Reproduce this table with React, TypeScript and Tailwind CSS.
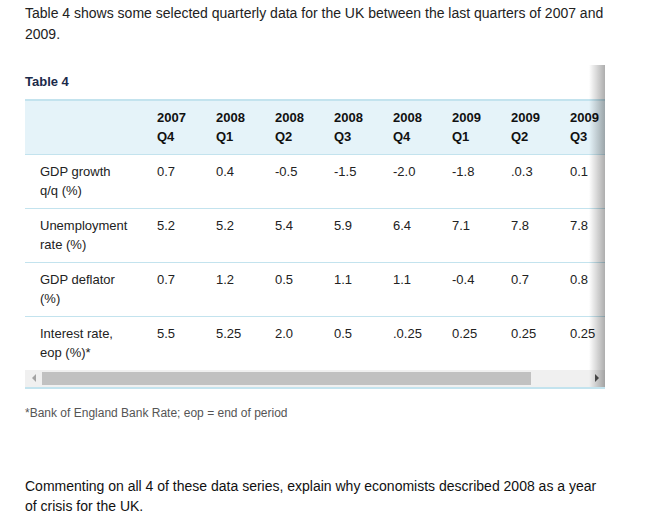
import React from "react";

const cols: [string, string][] = [
  ["2007", "Q4"],
  ["2008", "Q1"],
  ["2008", "Q2"],
  ["2008", "Q3"],
  ["2008", "Q4"],
  ["2009", "Q1"],
  ["2009", "Q2"],
  ["2009", "Q3"],
];

const rows: { label: [string, string]; vals: string[] }[] = [
  { label: ["GDP growth", "q/q (%)"], vals: ["0.7", "0.4", "-0.5", "-1.5", "-2.0", "-1.8", ".0.3", "0.1"] },
  { label: ["Unemployment", "rate (%)"], vals: ["5.2", "5.2", "5.4", "5.9", "6.4", "7.1", "7.8", "7.8"] },
  { label: ["GDP deflator", "(%)"], vals: ["0.7", "1.2", "0.5", "1.1", "1.1", "-0.4", "0.7", "0.8"] },
  { label: ["Interest rate,", "eop (%)*"], vals: ["5.5", "5.25", "2.0", "0.5", ".0.25", "0.25", "0.25", "0.25"] },
];

export default function App() {
  return (
    <div className="min-h-[530px] w-[663px] bg-white font-['Liberation_Sans',Arial,sans-serif]">
      <div className="pl-[25px]">
        <p className="w-[590px] pt-[3px] text-[14px] leading-[21px] text-[#222]">
          Table 4 shows some selected quarterly data for the UK between the last quarters of 2007 and 2009.
        </p>

        <div className="relative mt-[20px] w-[580px]">
          <div className="py-[7px] text-[13px] font-bold leading-[19.5px] text-[#1b2a4a]">Table 4</div>
          <div className="w-[580px] overflow-hidden border-t-2 border-b-2 border-[#c3e3ee]">
            <table className="w-[648px] table-fixed border-collapse text-[13px] leading-[19.5px] text-[#222]">
              <thead>
                <tr className="border-b border-[#c3e3ee] bg-[#e5f3f9]">
                  <th className="w-[117px] py-[7px] pl-[15px]" />
                  {cols.map((c, i) => (
                    <th key={i} className="w-[59px] py-[7px] pl-[15px] text-left align-top font-bold text-[#111]">
                      {c[0]}
                      <br />
                      {c[1]}
                    </th>
                  ))}
                  <th className="w-[59px]" />
                </tr>
              </thead>
              <tbody>
                {rows.map((r, ri) => (
                  <tr key={ri} className={ri < rows.length - 1 ? "border-b border-[#c3e3ee]" : ""}>
                    <td className="py-[7px] pl-[15px] align-top">
                      {r.label[0]}
                      <br />
                      {r.label[1]}
                    </td>
                    {r.vals.map((v, vi) => (
                      <td key={vi} className="py-[7px] pl-[15px] align-top">
                        {v}
                      </td>
                    ))}
                    <td />
                  </tr>
                ))}
              </tbody>
            </table>
            <div className="flex h-[17px] items-center bg-[#f0f0f0]">
              <div className="flex h-[17px] w-[17px] items-center justify-center">
                <div className="h-0 w-0 border-y-[4px] border-r-[4px] border-y-transparent border-r-[#a3a3a3]" />
              </div>
              <div className="h-[13px] w-[489px] bg-[#c1c1c1]" />
              <div className="flex-1" />
              <div className="flex h-[17px] w-[17px] items-center justify-center">
                <div className="h-0 w-0 border-y-[4px] border-l-[4px] border-y-transparent border-l-[#505050]" />
              </div>
            </div>
          </div>
          <div className="pointer-events-none absolute right-0 top-0 bottom-[2px] w-[16px] bg-linear-to-r from-[rgba(0,0,0,0)] to-[rgba(0,0,0,0.32)]" />
        </div>

        <p className="mt-[15px] text-[12px] leading-[18px] text-[#555]">
          *Bank of England Bank Rate; eop = end of period
        </p>

        <p className="mt-[54px] w-[580px] text-[14px] leading-[20px] text-[#111]">
          Commenting on all 4 of these data series, explain why economists described 2008 as a year of crisis for the UK.
        </p>
      </div>
    </div>
  );
}
